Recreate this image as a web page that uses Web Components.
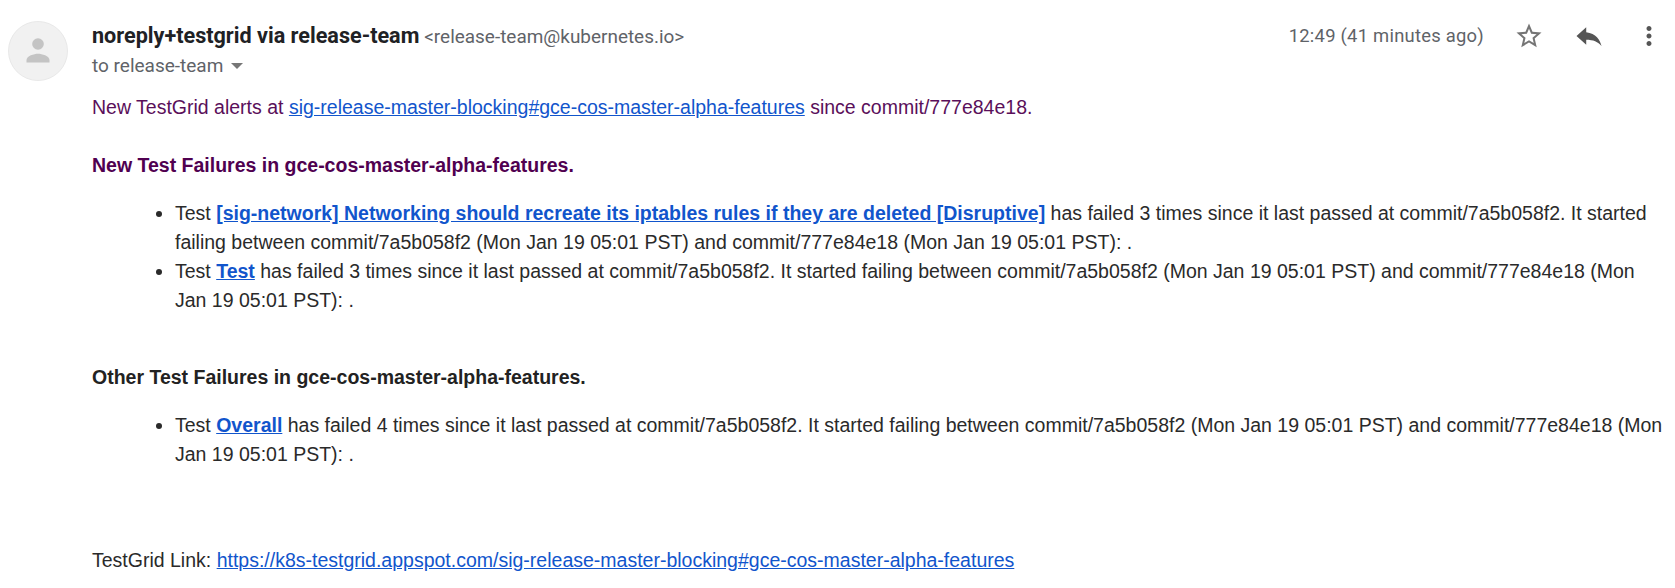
<!DOCTYPE html>
<html>
<head>
<meta charset="utf-8">
<title>TestGrid alert</title>
<style>
  html, body { margin: 0; padding: 0; background: #fff; overflow: hidden; }
  body { font-family: "Liberation Sans", Arial, sans-serif; }
</style>
</head>
<body>
<mail-message>
  <mail-header slot="header"
    sender="noreply+testgrid via release-team"
    address="&lt;release-team@kubernetes.io&gt;"
    recipient="to release-team"
    time="12:49 (41 minutes ago)"></mail-header>

  <alert-intro>New TestGrid alerts at <a href="#">sig-release-master-blocking#gce-cos-master-alpha-features</a> since commit/777e84e18.</alert-intro>

  <failure-section heading="New Test Failures in gce-cos-master-alpha-features." accent>
    <failure-item name="[sig-network] Networking should recreate its iptables rules if they are deleted [Disruptive]">has failed 3 times since it last passed at commit/7a5b058f2. It started failing between commit/7a5b058f2 (Mon Jan 19 05:01 PST) and commit/777e84e18 (Mon Jan 19 05:01 PST): .</failure-item>
    <failure-item name="Test">has failed 3 times since it last passed at commit/7a5b058f2. It started failing between commit/7a5b058f2 (Mon Jan 19 05:01 PST) and commit/777e84e18 (Mon Jan 19 05:01 PST): .</failure-item>
  </failure-section>

  <failure-section heading="Other Test Failures in gce-cos-master-alpha-features.">
    <failure-item name="Overall">has failed 4 times since it last passed at commit/7a5b058f2. It started failing between commit/7a5b058f2 (Mon Jan 19 05:01 PST) and commit/777e84e18 (Mon Jan 19 05:01 PST): .</failure-item>
  </failure-section>

  <grid-link href="https://k8s-testgrid.appspot.com/sig-release-master-blocking#gce-cos-master-alpha-features"></grid-link>
</mail-message>

<script>
const messageTemplate = document.createElement('template')
messageTemplate.innerHTML = `
  <style>
    :host { display: block; padding: 21px 0 0 8px; font: 19.5px/29px "Liberation Sans", Arial, sans-serif; color: #2a2a2a; }
    .body { padding: 0 9px 0 84px; }
  </style>
  <slot name="header"></slot>
  <div class="body"><slot></slot></div>`

customElements.define('mail-message',
  class extends HTMLElement {
    constructor () {
      super()
      this.attachShadow({ mode: 'open' })
      this.shadowRoot.appendChild(messageTemplate.content.cloneNode(true))
    }
  })

const headerTemplate = document.createElement('template')
headerTemplate.innerHTML = `
  <style>
    :host { display: flex; align-items: flex-start; font-family: Roboto, "Liberation Sans", sans-serif; height: 72px; padding-right: 11px; }
    .avatar { width: 60px; height: 60px; flex: none; margin-right: 24px; }
    .who { flex: 1; min-width: 0; padding-top: 2px; }
    .line1 { line-height: 26px; white-space: nowrap; }
    .sender { font-size: 21.6px; font-weight: 700; color: #202124; }
    .address { font-size: 18.95px; color: #5f6368; }
    .line2 { display: flex; align-items: center; gap: 8px; margin-top: 4px; font-size: 19px; line-height: 24px; color: #5f6368; }
    .caret { width: 0; height: 0; border: 6px solid transparent; border-top: 6px solid #777; border-bottom: 0; }
    .time { font-size: 18.4px; line-height: 26px; margin-top: 2px; color: #5f6368; white-space: nowrap; letter-spacing: .25px; }
    .actions { display: flex; align-items: center; gap: 30px; margin-left: 30px; }
    svg { display: block; }
  </style>
  <svg class="avatar" viewBox="0 0 60 60">
    <circle cx="30" cy="30" r="29.5" fill="#f1f1f1" stroke="#e8e8e8"/>
    <circle cx="30" cy="23" r="5.8" fill="#c4c4c4"/>
    <path d="M18.5 41.5v-2.4c0-4.3 7.6-6.4 11.5-6.4s11.5 2.1 11.5 6.4v2.4z" fill="#c4c4c4"/>
  </svg>
  <div class="who">
    <div class="line1"><span class="sender"></span> <span class="address"></span></div>
    <div class="line2"><span class="recipient"></span><span class="caret"></span></div>
  </div>
  <span class="time"></span>
  <div class="actions">
    <svg width="30" height="30" viewBox="0 0 24 24"><path fill="#757575" d="M22 9.24l-7.19-.62L12 2 9.19 8.63 2 9.24l5.46 4.73L5.82 21 12 17.27 18.18 21l-1.63-7.03L22 9.24zM12 15.4l-3.76 2.27 1-4.28-3.32-2.88 4.38-.38L12 6.1l1.71 4.04 4.38.38-3.32 2.88 1 4.28L12 15.4z"/></svg>
    <svg width="30" height="30" viewBox="1.2 0 21.6 24" preserveAspectRatio="none"><path fill="#555" d="M10 9V5l-7 7 7 7v-4.1c5 0 8.5 1.6 11 5.1-1-5-4-10-11-11z"/></svg>
    <svg width="30" height="30" viewBox="0 0 24 24"><path fill="#555" d="M12 8c1.1 0 2-.9 2-2s-.9-2-2-2-2 .9-2 2 .9 2 2 2zm0 2c-1.1 0-2 .9-2 2s.9 2 2 2 2-.9 2-2-.9-2-2-2zm0 6c-1.1 0-2 .9-2 2s.9 2 2 2 2-.9 2-2-.9-2-2-2z"/></svg>
  </div>`

customElements.define('mail-header',
  class extends HTMLElement {
    constructor () {
      super()
      this.attachShadow({ mode: 'open' })
      this.shadowRoot.appendChild(headerTemplate.content.cloneNode(true))
    }

    connectedCallback () {
      this.shadowRoot.querySelector('.sender').textContent = this.getAttribute('sender')
      this.shadowRoot.querySelector('.address').textContent = this.getAttribute('address')
      this.shadowRoot.querySelector('.recipient').textContent = this.getAttribute('recipient')
      this.shadowRoot.querySelector('.time').textContent = this.getAttribute('time')
    }
  })

const introTemplate = document.createElement('template')
introTemplate.innerHTML = `
  <style>
    :host { display: block; color: #5a0f5a; margin-bottom: 29px; }
    ::slotted(a) { color: #15c; }
  </style>
  <slot></slot>`

customElements.define('alert-intro',
  class extends HTMLElement {
    constructor () {
      super()
      this.attachShadow({ mode: 'open' })
      this.shadowRoot.appendChild(introTemplate.content.cloneNode(true))
    }
  })

const sectionTemplate = document.createElement('template')
sectionTemplate.innerHTML = `
  <style>
    :host { display: block; padding-bottom: 29px; }
    :host([accent]) h3 { color: #500050; }
    h3 { margin: 0; font-size: inherit; font-weight: 700; color: #222; }
    ul { margin: 19px 0; padding: 0 0 0 83px; }
  </style>
  <h3></h3>
  <ul><slot></slot></ul>`

customElements.define('failure-section',
  class extends HTMLElement {
    constructor () {
      super()
      this.attachShadow({ mode: 'open' })
      this.shadowRoot.appendChild(sectionTemplate.content.cloneNode(true))
    }

    connectedCallback () {
      this.shadowRoot.querySelector('h3').textContent = this.getAttribute('heading')
    }
  })

const itemTemplate = document.createElement('template')
itemTemplate.innerHTML = `
  <style>
    :host { display: list-item; list-style: disc outside; color: #2a2a2a; }
    a { color: #15c; font-weight: 700; }
  </style>
  Test <a href="#"></a> <slot></slot>`

customElements.define('failure-item',
  class extends HTMLElement {
    constructor () {
      super()
      this.attachShadow({ mode: 'open' })
      this.shadowRoot.appendChild(itemTemplate.content.cloneNode(true))
    }

    connectedCallback () {
      this.shadowRoot.querySelector('a').textContent = this.getAttribute('name')
    }
  })

const linkTemplate = document.createElement('template')
linkTemplate.innerHTML = `
  <style>
    :host { display: block; margin-top: 29px; color: #2a2a2a; }
    a { color: #15c; }
  </style>
  TestGrid Link: <a href="#"></a>`

customElements.define('grid-link',
  class extends HTMLElement {
    constructor () {
      super()
      this.attachShadow({ mode: 'open' })
      this.shadowRoot.appendChild(linkTemplate.content.cloneNode(true))
    }

    connectedCallback () {
      const link = this.shadowRoot.querySelector('a')
      link.textContent = this.getAttribute('href')
    }
  })
</script>
</body>
</html>
